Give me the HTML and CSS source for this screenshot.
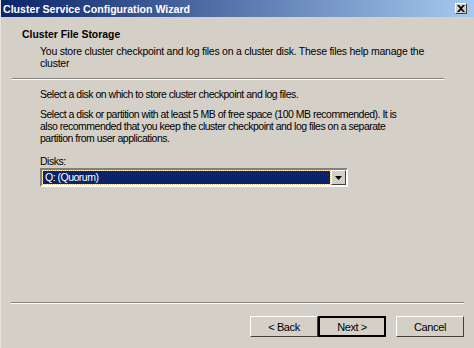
FILE: index.html
```html
<!DOCTYPE html>
<html lang="en">
<head>
    <meta charset="UTF-8">
    <title>Cluster Service Configuration Wizard</title>
    <link rel="stylesheet" href="styles.css">
</head>
<body>
    <div class="window">
        <div class="titlebar">
            <span class="title">Cluster Service Configuration Wizard</span>
            <span class="close">
                <svg width="8" height="7" viewBox="0 0 8 7"><path d="M0 0h2l2 2 2-2h2L5 3.5 8 7H6L4 5 2 7H0l3-3.5z" fill="#000"/></svg>
            </span>
        </div>
        <div class="header">
            <div class="header-title">Cluster File Storage</div>
            <div class="header-sub">You store cluster checkpoint and log files on a cluster disk. These files help manage the<br>cluster</div>
        </div>
        <div class="rule rule-top"></div>
        <div class="content">
            <p>Select a disk on which to store cluster checkpoint and log files.</p>
            <p>Select a disk or partition with at least 5 MB of free space (100 MB recommended). It is<br>also recommended that you keep the cluster checkpoint and log files on a separate<br>partition from user applications.</p>
            <label class="label">Disks:</label>
            <div class="combo">
                <div class="combo-value"><span>Q: (Quorum)</span></div>
                <div class="combo-arrow">
                    <svg width="7" height="4" viewBox="0 0 7 4"><path d="M0 0h7L3.5 4z" fill="#000"/></svg>
                </div>
            </div>
        </div>
        <div class="rule rule-bottom"></div>
        <div class="buttons">
            <button class="btn">&lt; Back</button>
            <button class="btn btn-default">Next &gt;</button>
            <button class="btn btn-cancel">Cancel</button>
        </div>
    </div>
</body>
</html>
```

FILE: styles.css
```css
body {
    margin: 0;
    padding: 0;
    background: #d4d0c8;
    font-family: "Liberation Sans", Arial, sans-serif;
    font-size: 10.5px;
    letter-spacing: -0.5px;
    color: #000;
}
.window {
    width: 474px;
    height: 348px;
    display: flex;
    flex-direction: column;
    box-sizing: border-box;
    border-left: 1px solid #e4e2dc;
}
.titlebar {
    height: 17px;
    background: linear-gradient(to right, #0a246a, #a6caf0);
    display: flex;
    align-items: center;
    justify-content: space-between;
    padding: 0 7px 0 2px;
}
.title {
    color: #fff;
    font-weight: bold;
    font-size: 10.6px;
    letter-spacing: 0;
}
.close {
    width: 12px;
    height: 11px;
    box-sizing: border-box;
    background: #d4d0c8;
    border: 1px solid;
    border-color: #fff #404040 #404040 #fff;
    display: flex;
    align-items: center;
    justify-content: center;
}
.header {
    padding: 11px 0 0 21px;
    height: 50px;
    white-space: nowrap;
}
.header-title {
    font-weight: bold;
    font-size: 10.4px;
    letter-spacing: 0;
    line-height: 14px;
}
.header-sub {
    padding: 3px 0 0 18px;
    line-height: 12px;
    letter-spacing: -0.25px;
}
.rule {
    height: 0;
    border-top: 1px solid #808080;
    border-bottom: 1px solid #fff;
}
.rule-top {
    margin: 0 30px 0 11px;
}
.content {
    padding: 8px 0 0 39px;
    flex-grow: 1;
    white-space: nowrap;
}
.content p {
    margin: 0 0 8px;
    line-height: 12px;
}
.label {
    display: block;
    margin-top: 11px;
    line-height: 12px;
}
.combo {
    margin-top: 1px;
    width: 308px;
    height: 19px;
    box-sizing: border-box;
    background: #fff;
    border: 2px solid;
    border-color: #808080 #fff #fff #808080;
    display: flex;
}
.combo-value {
    flex-grow: 1;
    padding: 1px;
    display: flex;
}
.combo-value span {
    flex-grow: 1;
    background: #0a246a;
    color: #fff;
    line-height: 13px;
    padding-left: 2px;
    outline: 1px dotted #e0c080;
}
.combo-arrow {
    width: 15px;
    box-sizing: border-box;
    background: #d4d0c8;
    border: 1px solid;
    border-color: #fff #404040 #404040 #fff;
    display: flex;
    align-items: center;
    justify-content: center;
}
.rule-bottom {
    margin: 0 10px 0 10px;
}
.buttons {
    display: flex;
    justify-content: flex-end;
    padding: 12px 10px 11px 0;
}
.btn {
    width: 68px;
    height: 21px;
    background: #d4d0c8;
    border: 1px solid;
    border-color: #fff #404040 #404040 #fff;
    font-family: "Liberation Sans", Arial, sans-serif;
    font-size: 11px;
    letter-spacing: -0.4px;
    color: #000;
    padding: 0;
}
.btn-default {
    border: 2px solid #000;
}
.btn-cancel {
    margin-left: 10px;
}
```
